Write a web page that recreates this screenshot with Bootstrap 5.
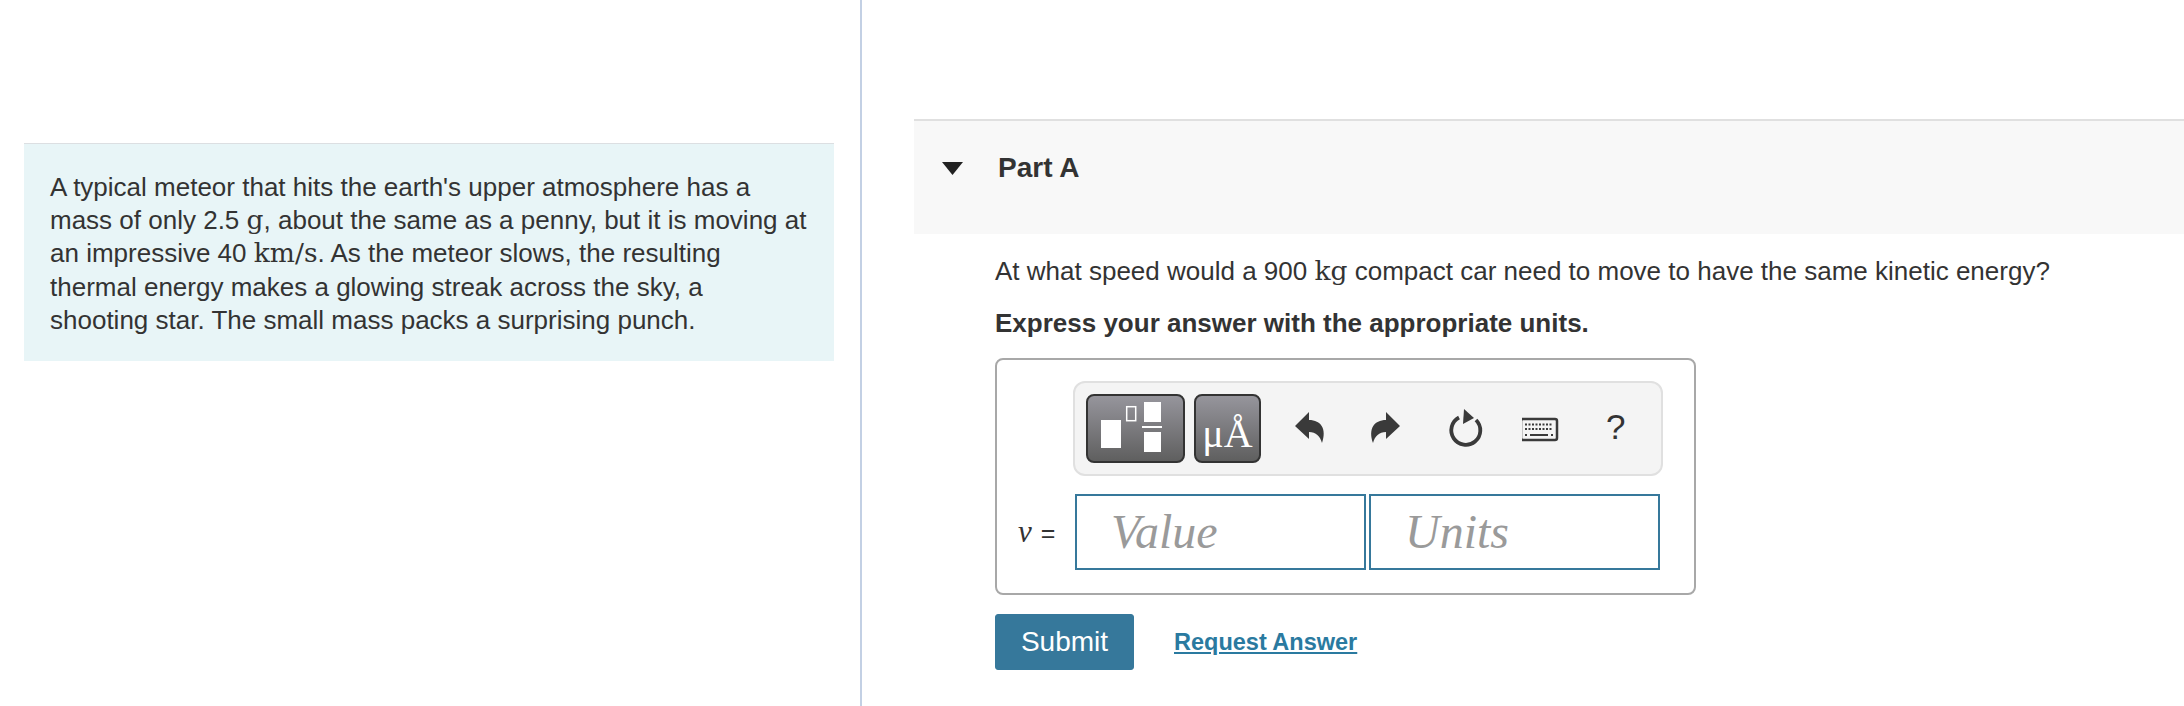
<!DOCTYPE html>
<html>
<head>
  <title>Part A</title>
  <link rel="stylesheet" href="https://cdn.jsdelivr.net/npm/bootstrap@5.3.0/dist/css/bootstrap.min.css">
  <style>
    html, body { height: 706px; overflow: hidden; }
    body { font-family: "Liberation Sans", Arial, sans-serif; color: #333; font-size: 26px; line-height: 33.2px; }
    .math { font-family: "DejaVu Serif", "Liberation Serif", serif; font-size: 26.5px; line-height: 0; }
    .pane-left { width: 862px; height: 706px; border-right: 2px solid #c3d0e4; padding: 143px 26px 0 24px; }
    .intro { background: #e8f5f7; border-top: 1px solid #dcdfe2; height: 218px; padding: 27px 20px 0 26px; }
    .pane-right { padding-top: 119px; min-width: 0; }
    .part-head { margin-left: 52px; height: 115px; background: #f8f8f8; border-top: 2px solid #e0e0e0; padding: 30px 0 0 28px; }
    .part-title { font-size: 28px; font-weight: 700; margin-left: 35px; }
    .part-arrow { width: 21px; height: 13px; margin-top: 11px; }
    .part-body { margin-left: 133px; padding-top: 21px; }
    .question { margin: 0 0 16px; height: 36px; }
    .express { margin: 0 0 18px; font-weight: 700; }
    .answer-box { width: 701px; height: 237px; border: 2px solid #a8a8a8; border-radius: 8px; padding: 21px 0 0 76px; }
    .tools { width: 590px; height: 95px; background: #f4f4f4; border: 2px solid #e0e0e0; border-radius: 12px; padding: 10px 0 0 11px; }
    .tpl-btn { height: 69px; margin-top: 1px; border: 2px solid #333; border-radius: 8px; background: linear-gradient(#96959c, #5f5f5f); padding: 0; }
    .tpl-one { width: 99px; margin-right: 9px; }
    .tpl-two { width: 67px; margin-right: 30px; color: #fff; font-family: "Liberation Serif", serif; font-size: 40px; line-height: 1; padding-top: 10px; }
    .tool-icon { width: 44px; height: 40px; margin-top: 16px; margin-right: 33px; }
    .help-mark { font-size: 35px; margin-left: 7px; margin-top: 17px; }
    .input-row { margin-top: 18px; margin-left: -55px; }
    .var-label { width: 57px; font-size: 25px; word-spacing: 2px; }
    .var-label i { font-family: "Liberation Serif", serif; font-size: 31px; }
    .unit-box { width: 291px; height: 76px; border: 2px solid #36789b; margin-right: 3px; padding-left: 34px; font-family: "Liberation Serif", serif; font-style: italic; font-size: 48px; color: #9a9a9a; line-height: 72px; }
    .form-actions { margin-top: 19px; }
    .btn-go { width: 139px; height: 56px; background: #36789b; border-color: #36789b; color: #fff; font-size: 28px; padding: 0; border-radius: 3px; }
    .btn-go:hover { background: #2c6583; border-color: #2c6583; color: #fff; }
    .ask-link { margin-left: 40px; color: #2a7aa0; font-weight: 700; font-size: 23.5px; }
  </style>
</head>
<body>
<div class="d-flex">
  <div class="pane-left flex-shrink-0">
    <div class="intro">A typical meteor that hits the earth's upper atmosphere has a mass of only 2.5 <span class="math">g</span>, about the same as a penny, but it is moving at an impressive 40 <span class="math">km/s</span>. As the meteor slows, the resulting thermal energy makes a glowing streak across the sky, a<br>shooting star. The small mass packs a surprising punch.</div>
  </div>
  <div class="pane-right flex-grow-1">
    <div class="part-head d-flex align-items-start">
      <svg class="part-arrow" viewBox="0 0 22 14" preserveAspectRatio="none"><path d="M0 0H22L11 14Z" fill="#222"/></svg>
      <span class="part-title">Part A</span>
    </div>
    <div class="part-body">
      <p class="question">At what speed would a 900 <span class="math">kg</span> compact car need to move to have the same kinetic energy?</p>
      <p class="express">Express your answer with the appropriate units.</p>
      <div class="answer-box">
        <div class="tools d-flex align-items-start">
          <button class="tpl-btn tpl-one" type="button" aria-label="templates">
            <svg width="95" height="65" viewBox="0 0 95 65" class="d-block">
              <rect x="13" y="24" width="20" height="28" fill="#fff"/>
              <rect x="38.700" y="10.700" width="9" height="14" fill="none" stroke="#fff" stroke-width="1.500"/>
              <rect x="56" y="6" width="17" height="20" fill="#fff"/>
              <rect x="54" y="30" width="20" height="2" fill="#fff"/>
              <rect x="56" y="36" width="17" height="20" fill="#fff"/>
            </svg>
          </button>
          <button class="tpl-btn tpl-two" type="button">μÅ</button>
          <svg class="tool-icon" viewBox="0 0 44 40"><path d="M4 17 18 3V11C30 11 36 20 31 34 29 27 25 23 18 23V30Z" fill="#3a3a3a"/></svg>
          <svg class="tool-icon" viewBox="0 0 44 40"><path d="M32 17 18 3V11C6 11 0 20 5 34 7 27 11 23 18 23V30Z" fill="#3a3a3a"/></svg>
          <svg class="tool-icon" viewBox="2 2 44 40"><path d="M16 10.500A14.500 14.500 0 1 0 33 13" fill="none" stroke="#3a3a3a" stroke-width="3.800"/><path d="M21 2 31 11 20 17Z" fill="#3a3a3a"/></svg>
          <svg class="tool-icon" viewBox="5 0 44 40"><rect x="4" y="10" width="36" height="21" rx="2" fill="none" stroke="#3a3a3a" stroke-width="2.500"/><path d="M8 15.500H36M8 20H36M8 26H10M34 26H36" stroke="#3a3a3a" stroke-width="2" stroke-dasharray="2 1.500" fill="none"/><path d="M13 26H31" stroke="#3a3a3a" stroke-width="2"/></svg>
          <span class="help-mark">?</span>
        </div>
        <div class="input-row d-flex align-items-center">
          <span class="var-label"><i>v</i> =</span>
          <div class="unit-box">Value</div>
          <div class="unit-box">Units</div>
        </div>
      </div>
      <div class="form-actions d-flex align-items-center">
        <button class="btn btn-go" type="button">Submit</button>
        <a class="ask-link" href="#">Request Answer</a>
      </div>
    </div>
  </div>
</div>
<script src="https://cdn.jsdelivr.net/npm/bootstrap@5.3.0/dist/js/bootstrap.bundle.min.js"></script>
</body>
</html>
